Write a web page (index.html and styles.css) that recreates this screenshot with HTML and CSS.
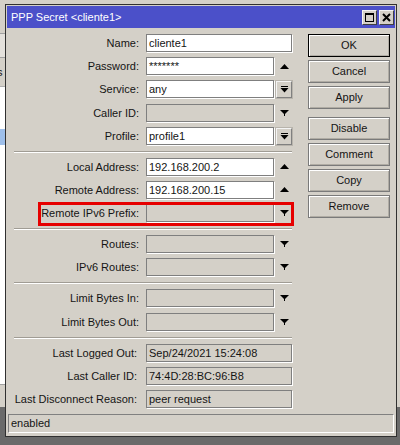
FILE: index.html
```html
<!DOCTYPE html>
<html lang="en">
<head>
    <meta charset="UTF-8">
    <title>PPP Secret &lt;cliente1&gt;</title>
    <link rel="stylesheet" href="styles.css">
</head>
<body>
    <div class="desk">
        <!-- list window sitting behind the dialog -->
        <div class="backwin">
            <div class="bw-a"></div>
            <div class="bw-b"></div>
            <div class="bw-c">s</div>
            <div class="bw-d"></div>
            <div class="bw-sel"></div>
            <div class="bw-rows"></div>
            <div class="bw-foot"></div>
        </div>

        <div class="win">
            <div class="titlebar">
                <span class="title">PPP Secret &lt;cliente1&gt;</span>
                <div class="tb-btns">
                    <span class="tb">
                        <svg width="15" height="15" viewBox="0 0 15 15"><rect x="3.5" y="3.5" width="8" height="8" fill="none" stroke="#000" stroke-width="1"/><rect x="3" y="3" width="9" height="2" fill="#000"/></svg>
                    </span>
                    <span class="tb">
                        <svg width="15" height="15" viewBox="0 0 15 15"><path d="M4 4L11 11M11 4L4 11" stroke="#000" stroke-width="2"/></svg>
                    </span>
                </div>
            </div>

            <div class="body">
                <div class="form">
                    <div class="sect">
                        <label>Name:</label>
                        <div class="field wide">cliente1</div>

                        <label>Password:</label>
                        <div class="field">*******</div>
                        <span class="arr"><svg width="9" height="5" viewBox="0 0 9 5"><polygon points="4.5,0 9,5 0,5" fill="#000"/></svg></span>

                        <label>Service:</label>
                        <div class="field">any</div>
                        <span class="drop"><svg width="9" height="9" viewBox="0 0 9 9"><rect x="1" y="1" width="7" height="1" fill="#000"/><polygon points="0.5,3 8.5,3 4.5,7.5" fill="#000"/></svg></span>

                        <label>Caller ID:</label>
                        <div class="field ro"></div>
                        <span class="arr"><svg width="9" height="6" viewBox="0 0 9 6"><polygon points="0,0 9,0 5,4 5,6 4,6 4,4" fill="#000"/></svg></span>

                        <label>Profile:</label>
                        <div class="field">profile1</div>
                        <span class="drop"><svg width="9" height="9" viewBox="0 0 9 9"><rect x="1" y="1" width="7" height="1" fill="#000"/><polygon points="0.5,3 8.5,3 4.5,7.5" fill="#000"/></svg></span>
                    </div>

                    <div class="sep"></div>

                    <div class="sect">
                        <label>Local Address:</label>
                        <div class="field">192.168.200.2</div>
                        <span class="arr"><svg width="9" height="5" viewBox="0 0 9 5"><polygon points="4.5,0 9,5 0,5" fill="#000"/></svg></span>

                        <label>Remote Address:</label>
                        <div class="field">192.168.200.15</div>
                        <span class="arr"><svg width="9" height="5" viewBox="0 0 9 5"><polygon points="4.5,0 9,5 0,5" fill="#000"/></svg></span>

                        <label>Remote IPv6 Prefix:</label>
                        <div class="field ro"></div>
                        <span class="arr"><svg width="9" height="6" viewBox="0 0 9 6"><polygon points="0,0 9,0 5,4 5,6 4,6 4,4" fill="#000"/></svg></span>

                        <div class="mark"></div>
                    </div>

                    <div class="sep"></div>

                    <div class="sect">
                        <label>Routes:</label>
                        <div class="field ro"></div>
                        <span class="arr"><svg width="9" height="6" viewBox="0 0 9 6"><polygon points="0,0 9,0 5,4 5,6 4,6 4,4" fill="#000"/></svg></span>

                        <label>IPv6 Routes:</label>
                        <div class="field ro"></div>
                        <span class="arr"><svg width="9" height="6" viewBox="0 0 9 6"><polygon points="0,0 9,0 5,4 5,6 4,6 4,4" fill="#000"/></svg></span>
                    </div>

                    <div class="sep"></div>

                    <div class="sect">
                        <label>Limit Bytes In:</label>
                        <div class="field ro"></div>
                        <span class="arr"><svg width="9" height="6" viewBox="0 0 9 6"><polygon points="0,0 9,0 5,4 5,6 4,6 4,4" fill="#000"/></svg></span>

                        <label>Limit Bytes Out:</label>
                        <div class="field ro"></div>
                        <span class="arr"><svg width="9" height="6" viewBox="0 0 9 6"><polygon points="0,0 9,0 5,4 5,6 4,6 4,4" fill="#000"/></svg></span>
                    </div>

                    <div class="sep"></div>

                    <div class="sect last">
                        <label>Last Logged Out:</label>
                        <div class="field ro wide">Sep/24/2021 15:24:08</div>

                        <label>Last Caller ID:</label>
                        <div class="field ro wide">74:4D:28:BC:96:B8</div>

                        <label>Last Disconnect Reason:</label>
                        <div class="field ro wide">peer request</div>
                    </div>
                </div>

                <div class="actions">
                    <div class="btn default">OK</div>
                    <div class="btn">Cancel</div>
                    <div class="btn">Apply</div>
                    <div class="btn gap">Disable</div>
                    <div class="btn">Comment</div>
                    <div class="btn">Copy</div>
                    <div class="btn">Remove</div>
                </div>
            </div>

            <div class="status">enabled</div>
        </div>
    </div>
</body>
</html>
```

FILE: styles.css
```css
* {
    box-sizing: border-box;
}
html,
body {
    margin: 0;
    height: 100%;
}
body {
    font: 11px "Liberation Sans", Arial, sans-serif;
    color: #141414;
    overflow: hidden;
}
.desk {
    position: relative;
    width: 400px;
    height: 445px;
    background: linear-gradient(#d4d0c8 0 407px, #6a6a6a 407px);
}

/* window behind */
.backwin {
    position: absolute;
    left: 0;
    top: 0;
    width: 5px;
    height: 445px;
    display: flex;
    flex-direction: column;
    overflow: hidden;
}
.bw-a {
    height: 33px;
    background: #d4d0c8;
}
.bw-b {
    height: 25px;
    border-top: 1px solid #a0a0a0;
    border-bottom: 1px solid #a0a0a0;
    background: #e4e1dc;
}
.bw-c {
    height: 28px;
    background: #d4d0c8;
    line-height: 28px;
    text-indent: -3px;
}
.bw-d {
    height: 43px;
    border-top: 1px solid #b0b0b0;
    background: #fff;
}
.bw-sel {
    height: 16px;
    background: #9ebfea;
}
.bw-rows {
    height: 239px;
    background: #fff;
}
.bw-foot {
    height: 23px;
    border-top: 1px solid #a0a0a0;
    background: #d4d0c8;
}

/* dialog */
.win {
    position: absolute;
    left: 5px;
    top: 4px;
    width: 392px;
    height: 433px;
    border: 1px solid #303030;
    padding: 1px;
    background: #d4d0c8;
    display: flex;
    flex-direction: column;
}
.titlebar {
    height: 22px;
    background: #4b50c9;
    color: #fff;
    display: flex;
    align-items: center;
    justify-content: space-between;
    padding: 0 1px 0 4px;
}
.title {
    font-size: 11px;
}
.tb-btns {
    display: flex;
    gap: 2px;
    padding-top: 1px;
}
.tb {
    width: 15px;
    height: 15px;
    background: #d4d0c8;
    border: 1px solid #f4f4f4;
    border-right-color: #404040;
    border-bottom-color: #404040;
    display: flex;
}
.tb svg {
    margin: -1px;
}

.body {
    flex: 1;
    display: flex;
    padding: 6px 0 0 1px;
}
.form {
    width: 284px;
}
.sect {
    position: relative;
    display: grid;
    grid-template-columns: 138px 128px 18px;
    row-gap: 5.2px;
    grid-auto-rows: 18px;
}
.sect label {
    grid-column: 1;
    padding-right: 7px;
    text-align: right;
    line-height: 18px;
    white-space: nowrap;
}
.sect.last label {
    padding-right: 9px;
}
.field {
    grid-column: 2;
    height: 18px;
    border: 1px solid #7f7f7f;
    box-shadow: 1px 1px 0 #fff;
    background: #fff;
    padding: 0 2px;
    line-height: 16px;
    white-space: nowrap;
    overflow: hidden;
}
.field.wide {
    grid-column: 2 / 4;
}
.field.ro {
    background: #d4d0c8;
}
.arr {
    display: flex;
    align-items: center;
    padding-left: 6px;
}
.drop {
    width: 16px;
    height: 17px;
    margin: 1px 0 0 2px;
    border: 1px solid #f4f4f4;
    border-right-color: #808080;
    border-bottom-color: #808080;
    outline: 1px solid #b8b4ac;
    display: flex;
    align-items: center;
    justify-content: center;
}
.sep {
    height: 2px;
    margin: 6px 0 5px 6px;
    border-top: 1px solid #a09c94;
    border-bottom: 1px solid #fff;
}
.mark {
    position: absolute;
    grid-row: 3;
    grid-column: 1 / -1;
    left: 30px;
    right: -2px;
    top: -2px;
    bottom: -4px;
    border: 3px solid #e60000;
}

.actions {
    width: 82px;
    margin-left: 16px;
    display: flex;
    flex-direction: column;
    gap: 3px;
}
.btn {
    height: 23px;
    border: 1px solid #7a7a7a;
    box-shadow: inset 1px 1px 0 #fff, inset -1px -1px 0 #b0aca4;
    text-align: center;
    line-height: 21px;
}
.btn.default {
    border-color: #000;
}
.btn.gap {
    margin-top: 5px;
}

.status {
    height: 19px;
    margin: 0 1px 2px;
    border: 1px solid #fff;
    border-top-color: #808080;
    border-left-color: #808080;
    padding-left: 2px;
    line-height: 17px;
}
```
